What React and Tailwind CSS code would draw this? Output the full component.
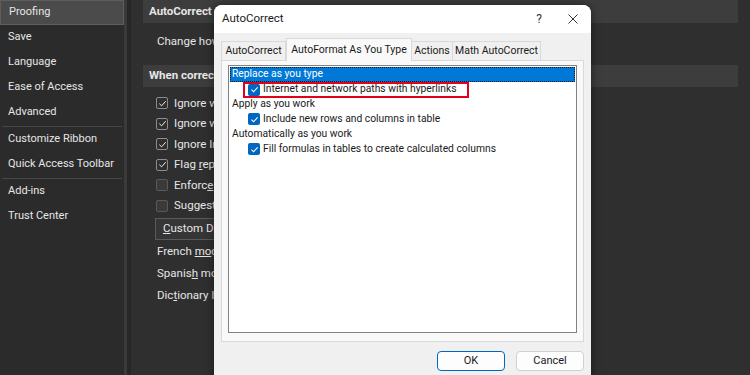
import React from "react";

const FONT = { fontFamily: 'Roboto, "Noto Sans", sans-serif' };

function DarkCheck({ checked }) {
  return (
    <span
      className={
        "flex h-[12px] w-[12px] shrink-0 items-center justify-center rounded-[2px] border " +
        (checked ? "border-[#8c8c8c] bg-[#2f2f2f]" : "border-[#5a5a5a] bg-[#3a3a3a]")
      }
    >
      {checked && (
        <svg width="9" height="9" viewBox="0 0 10 10">
          <path d="M1.5 5.2 L4 7.6 L8.6 2.4" fill="none" stroke="#f0f0f0" strokeWidth="1.1" />
        </svg>
      )}
    </span>
  );
}

function BlueCheck() {
  return (
    <span className="flex h-[12px] w-[12px] shrink-0 items-center justify-center rounded-[2px] bg-[#0067c0]">
      <svg width="9" height="9" viewBox="0 0 10 10">
        <path d="M1.6 5.2 L4 7.5 L8.5 2.6" fill="none" stroke="#ffffff" strokeWidth="1.2" />
      </svg>
    </span>
  );
}

const sideItems = [
  { t: "Proofing", sel: true },
  { t: "Save" },
  { t: "Language" },
  { t: "Ease of Access" },
  { t: "Advanced" },
  { div: true },
  { t: "Customize Ribbon" },
  { t: "Quick Access Toolbar" },
  { div: true },
  { t: "Add-ins" },
  { t: "Trust Center" },
];

const checks = [
  { c: true, t: <>Ignore words in <u>U</u>PPERCASE</> },
  { c: true, t: <>Ignore words that contain num<u>b</u>ers</> },
  { c: true, t: <>Ignore Internet and <u>f</u>ile addresses</> },
  { c: true, t: <>Flag <u>r</u>epeated words</> },
  { c: false, t: <>Enforc<u>e</u> accented uppercase in French</> },
  { c: false, t: <>Suggest from main dictionary <u>o</u>nly</> },
];

export default function App() {
  return (
    <div
      className="relative flex h-[375px] w-[750px] overflow-hidden whitespace-nowrap bg-[#2f2f2f] text-[#e6e6e6]"
      style={FONT}
    >
      {/* Sidebar */}
      <div className="flex w-[124px] shrink-0 flex-col bg-[#2b2b2b]">
        {sideItems.map((it, i) =>
          it.div ? (
            <div key={i} className="flex h-[2px] items-center px-[2px]">
              <div className="h-px w-full bg-[#474747]" />
            </div>
          ) : (
            <div
              key={i}
              className={
                "flex h-[25px] items-center pl-[8px] text-[11px] " +
                (it.sel ? "border border-[#5e5e5e] bg-[#4b4b4b] pl-[7px]" : "")
              }
            >
              {it.t}
            </div>
          )
        )}
      </div>
      <div className="w-[3px] shrink-0 bg-[#3a3a3a]" />
      <div className="w-[4px] shrink-0 bg-[#272727]" />

      {/* Main */}
      <div className="flex flex-1 flex-col pl-[12px] pr-[12px] text-[11.5px]">
        <div className="flex h-[23px] shrink-0 items-center bg-[#3d3d3d] pl-[6px] font-bold">
          AutoCorrect options
        </div>
        <div className="mt-[9px] flex h-[20px] items-center pl-[14px]">
          Change how Word corrects and formats text as you type:
        </div>
        <div className="mt-[13px] flex h-[22px] shrink-0 items-center bg-[#3d3d3d] pl-[6px] font-bold">
          When correcting spelling in Microsoft Office programs
        </div>
        <div className="mt-[6px] flex flex-col pl-[13px]">
          {checks.map((c, i) => (
            <div key={i} className="flex h-[20.5px] items-center gap-[6px]">
              <DarkCheck checked={c.c} />
              <span>{c.t}</span>
            </div>
          ))}
        </div>
        <div className="ml-[12px] mt-[2px] flex h-[22px] w-[140px] items-center border border-[#5a5a5a] bg-[#363636] pl-[7px]">
          <u>C</u>ustom Dictionaries...
        </div>
        <div className="mt-[1px] flex flex-col pl-[14px]">
          <div className="flex h-[22px] items-center">
            French&nbsp;<u>mo</u>des:
          </div>
          <div className="flex h-[22px] items-center">
            Spanis<u>h</u>&nbsp;modes:
          </div>
          <div className="flex h-[22px] items-center">
            Dic<u>t</u>ionary language:
          </div>
        </div>
      </div>

      {/* Dialog overlay */}
      <div
        className="absolute left-[214px] top-[5px] flex h-[380px] w-[377px] flex-col overflow-hidden rounded-t-[8px] bg-[#f0f0f0] text-[#1a1a1a] shadow-[0_0_10px_rgba(0,0,0,0.5)]"
        style={FONT}
      >
        <div className="flex h-[28px] shrink-0 items-center bg-white pl-[8px] text-[11.5px]">
          <span className="flex-1">AutoCorrect</span>
          <span className="w-[20px] text-center text-[12px] text-[#333]">?</span>
          <span className="ml-[17px] mr-[11px] flex h-[14px] w-[14px] items-center justify-center">
            <svg width="10" height="10" viewBox="0 0 10 10">
              <path d="M0.5 0.5 L9.5 9.5 M9.5 0.5 L0.5 9.5" stroke="#333" strokeWidth="1" />
            </svg>
          </span>
        </div>

        {/* Tabs */}
        <div className="relative z-10 mt-[5px] flex h-[22px] shrink-0 items-end px-[7px] text-[10.5px]">
          <div className="flex h-[19px] w-[65px] items-center justify-center border border-b-0 border-[#d9d9d9] bg-[#f0f0f0]">
            AutoCorrect
          </div>
          <div className="-mb-px flex h-[23px] w-[126px] items-center justify-center border border-b-0 border-[#d9d9d9] bg-[#f9f9f9]">
            AutoFormat As You Type
          </div>
          <div className="flex h-[19px] w-[41px] items-center justify-center border border-l-0 border-b-0 border-[#d9d9d9] bg-[#f0f0f0]">
            Actions
          </div>
          <div className="flex h-[19px] w-[88px] items-center justify-center border border-l-0 border-b-0 border-[#d9d9d9] bg-[#f0f0f0]">
            Math AutoCorrect
          </div>
        </div>

        <div className="mx-[7px] flex h-[282px] shrink-0 flex-col border border-[#d9d9d9] bg-[#f9f9f9] px-[6px] pb-[8px] pt-[4px]">
          <div className="flex flex-1 flex-col border border-[#828282] bg-white pt-px text-[10.3px] leading-none">
            <div className="mx-px flex h-[14.5px] items-center border border-dotted border-[#1a1a1a] bg-[#0078d7] pl-px text-white">
              Replace as you type
            </div>
            <div className="flex h-[15px] items-start">
              <div className="ml-[14px] flex h-[16px] items-center gap-[3px] border-2 border-[#e3001b] pl-[3px] pr-[10px]">
                <BlueCheck />
                <span>Internet and network paths with hyperlinks</span>
              </div>
            </div>
            <div className="flex h-[15px] items-center pl-[3px]">Apply as you work</div>
            <div className="flex h-[15px] items-center gap-[3px] pl-[19px]">
              <BlueCheck />
              <span>Include new rows and columns in table</span>
            </div>
            <div className="flex h-[15px] items-center pl-[3px]">Automatically as you work</div>
            <div className="flex h-[15px] items-center gap-[3px] pl-[19px]">
              <BlueCheck />
              <span>Fill formulas in tables to create calculated columns</span>
            </div>
          </div>
        </div>

        <div className="mt-[9px] flex justify-end gap-[11px] pr-[7px] text-[11px]">
          <button className="flex h-[20px] w-[68px] items-center justify-center rounded-[4px] border border-[#0067c0] bg-[#fdfdfd]">
            OK
          </button>
          <button className="flex h-[20px] w-[68px] items-center justify-center rounded-[4px] border border-[#d0d0d0] bg-[#fdfdfd]">
            Cancel
          </button>
        </div>
      </div>
    </div>
  );
}
